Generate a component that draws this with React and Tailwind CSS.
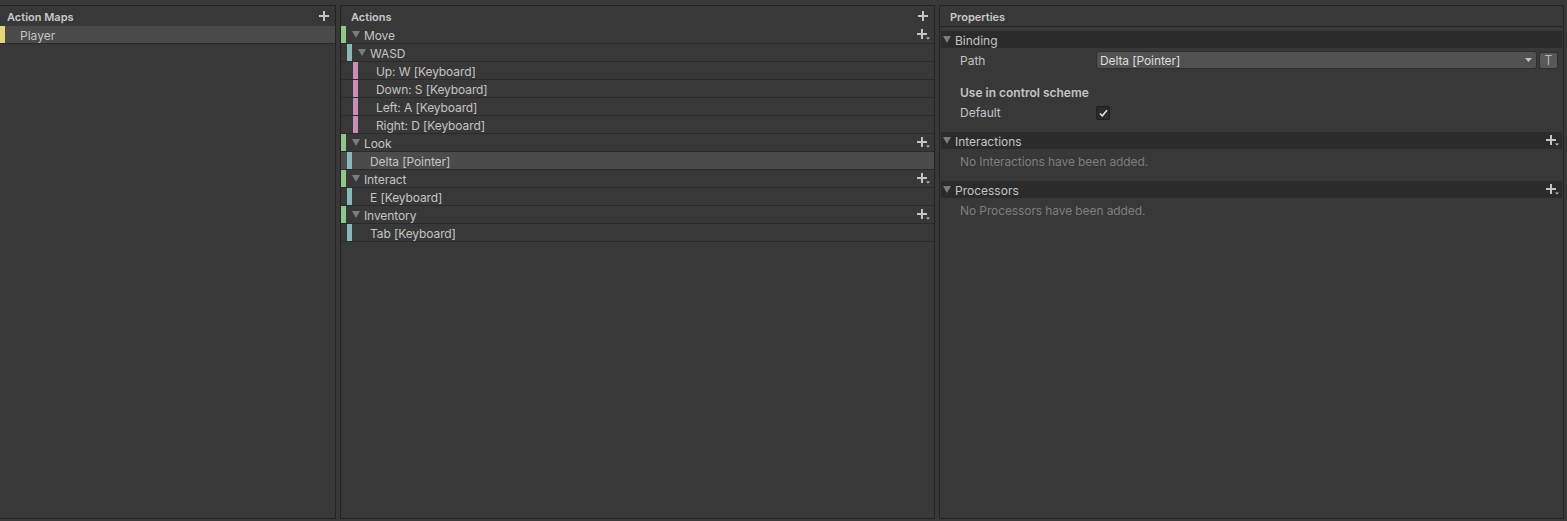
import React from 'react'

const FONT = { fontFamily: 'Inter, "Noto Sans", "Liberation Sans", sans-serif' }

const barColors = {
  green: 'bg-[#8dc78a]',
  teal: 'bg-[#89b8bb]',
  pink: 'bg-[#c98fb2]',
  yellow: 'bg-[#e8d47c]',
}

const indents = ['ml-0', 'ml-[6px]', 'ml-[12px]']

const actionRows = [
  { label: 'Move', level: 0, bar: 'green', fold: true, add: true },
  { label: 'WASD', level: 1, bar: 'teal', fold: true },
  { label: 'Up: W [Keyboard]', level: 2, bar: 'pink' },
  { label: 'Down: S [Keyboard]', level: 2, bar: 'pink' },
  { label: 'Left: A [Keyboard]', level: 2, bar: 'pink' },
  { label: 'Right: D [Keyboard]', level: 2, bar: 'pink' },
  { label: 'Look', level: 0, bar: 'green', fold: true, add: true },
  { label: 'Delta [Pointer]', level: 1, bar: 'teal', selected: true },
  { label: 'Interact', level: 0, bar: 'green', fold: true, add: true },
  { label: 'E [Keyboard]', level: 1, bar: 'teal' },
  { label: 'Inventory', level: 0, bar: 'green', fold: true, add: true },
  { label: 'Tab [Keyboard]', level: 1, bar: 'teal' },
]

const Triangle = () => (
  <svg width="8" height="7" viewBox="0 0 8 7" className="block">
    <path d="M0 0 H8 L4 7 Z" fill="#7c7c7c" />
  </svg>
)

// plus button, the "+." variant opens a menu
const Plus = ({ menu }) => (
  <svg width={menu ? 13 : 10} height="11" viewBox={menu ? '0 0 13 11' : '0 0 10 11'} className="block">
    <rect x="4" y="0" width="2" height="10" fill="#c4c4c4" />
    <rect x="0" y="4" width="10" height="2" fill="#c4c4c4" />
    {menu && <path d="M9 8.5 H13 L11 10.5 Z" fill="#c4c4c4" />}
  </svg>
)

const PanelHeader = ({ title, pad, plus, border }) => (
  <div className={`flex h-[20px] shrink-0 items-center justify-between ${pad} ${border ? 'border-b border-[#232323] box-content' : ''}`}>
    <span className="pt-[2px] text-[11px] leading-[14px] font-semibold text-[#c8c8c8]">{title}</span>
    {plus && <Plus />}
  </div>
)

const ActionRow = ({ row }) => (
  <div
    className={`flex h-[18px] items-stretch border-b border-[#2a2a2a] pr-[4px] ${
      row.selected ? 'bg-[#4b4b4b]' : ''
    }`}
  >
    <div className={`w-[5px] shrink-0 ${indents[row.level]} ${barColors[row.bar]}`} />
    <div className="flex w-[18px] shrink-0 items-center pl-[6px]">{row.fold && <Triangle />}</div>
    <span className="flex-1 text-[12px] leading-[19px] tracking-[-0.1px] text-[#c4c4c4]">{row.label}</span>
    {row.add && (
      <div className="flex items-center">
        <Plus menu />
      </div>
    )}
  </div>
)

const FoldBar = ({ title, plus }) => (
  <div className="flex h-[17px] items-center bg-[#2b2b2b] pl-[2px] pr-[3px]">
    <Triangle />
    <span className="ml-[4px] flex-1 pt-[2px] text-[12px] leading-[14px] text-[#c4c4c4]">{title}</span>
    {plus && <Plus menu />}
  </div>
)

const Label = ({ children }) => (
  <span className="w-[155px] shrink-0 pl-[19px] pt-[2px] text-[12px] leading-[14px] text-[#c4c4c4]">{children}</span>
)

export default function App() {
  return (
    <div style={FONT} className="flex h-[521px] w-[1567px] gap-[4px] overflow-hidden bg-[#383838] pt-[5px]">
      {/* Action maps */}
      <div className="flex h-[514px] w-[336px] shrink-0 flex-col border-t border-r border-b border-[#232323]">
        <PanelHeader title="Action Maps" pad="pl-[7px] pr-[6px]" plus />
        <div className="flex h-[18px] items-stretch border-b border-[#2a2a2a] bg-[#4a4a4a]">
          <div className="w-[5px] bg-[#e8d47c]" />
          <span className="ml-[15px] text-[12px] leading-[19px] text-[#c4c4c4]">Player</span>
        </div>
      </div>

      {/* Actions */}
      <div className="flex h-[514px] w-[595px] shrink-0 flex-col border border-[#232323]">
        <PanelHeader title="Actions" pad="pl-[10px] pr-[6px]" plus />
        {actionRows.map((row) => (
          <ActionRow key={row.label} row={row} />
        ))}
      </div>

      {/* Properties */}
      <div className="flex h-[514px] w-[625px] shrink-0 flex-col border border-[#232323]">
        <PanelHeader title="Properties" pad="pl-[10px]" border />
        <div className="flex flex-col px-[1px]">
          <div className="mt-[4px]">
            <FoldBar title="Binding" />
          </div>
          <div className="mt-[3px] flex h-[18px] items-center">
            <Label>Path</Label>
            <div className="flex h-[18px] flex-1 items-center rounded-[3px] border border-[#2f2f2f] bg-[#515151] pl-[3px] pr-[4px]">
              <span className="flex-1 pt-[2px] text-[12px] leading-[14px] tracking-[-0.1px] text-[#dcdcdc]">Delta [Pointer]</span>
              <svg width="7" height="4" viewBox="0 0 7 4">
                <path d="M0 0 H7 L3.5 4 Z" fill="#c4c4c4" />
              </svg>
            </div>
            <div className="ml-[2px] mr-[4px] flex h-[17px] w-[19px] items-center justify-center rounded-[3px] border border-[#2f2f2f] bg-[#585858] pt-[1px] text-[13px] font-light text-[#c4c4c4]">
              T
            </div>
          </div>
          <div className="mt-[15px] flex h-[16px] items-center pl-[19px] pt-[2px] text-[12px] leading-[14px] font-semibold text-[#c4c4c4]">
            Use in control scheme
          </div>
          <div className="mt-[3px] flex h-[18px] items-center">
            <Label>Default</Label>
            <div className="mt-[1px] flex h-[14px] w-[14px] items-center justify-center rounded-[2px] border border-[#1f1f1f] bg-[#2a2a2a]">
              <svg width="9" height="8" viewBox="0 0 9 8">
                <path d="M1 4.5 L3.3 6.8 L8 1.2" stroke="#e6e6e6" strokeWidth="1.5" fill="none" />
              </svg>
            </div>
          </div>
          <div className="mt-[11px]">
            <FoldBar title="Interactions" plus />
          </div>
          <div className="mt-[3px] flex h-[18px] items-center pl-[19px] pt-[2px] text-[12px] leading-[14px] tracking-[-0.1px] text-[#7e7e7e]">
            No Interactions have been added.
          </div>
          <div className="mt-[11px]">
            <FoldBar title="Processors" plus />
          </div>
          <div className="mt-[3px] flex h-[18px] items-center pl-[19px] pt-[2px] text-[12px] leading-[14px] tracking-[-0.1px] text-[#7e7e7e]">
            No Processors have been added.
          </div>
        </div>
      </div>
    </div>
  )
}
